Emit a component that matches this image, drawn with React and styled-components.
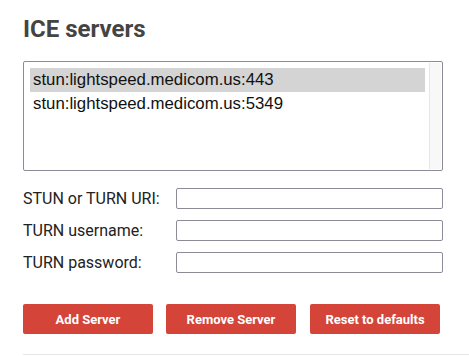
import React, { useState } from "react";
import styled, { createGlobalStyle } from "styled-components";

const GlobalStyle = createGlobalStyle`
  html, body {
    margin: 0;
    padding: 0;
    background: #fff;
  }
  body {
    font-family: Roboto, "Liberation Sans", sans-serif;
    color: #222;
  }
`;

const servers = ["stun:lightspeed.medicom.us:443", "stun:lightspeed.medicom.us:5349"];

const fields = [
  { id: "uri", label: "STUN or TURN URI:", type: "text" },
  { id: "user", label: "TURN username:", type: "text" },
  { id: "pass", label: "TURN password:", type: "password" }
];

const App = () => {
  const [selected, setSelected] = useState(0);

  return (
    <Page>
      <GlobalStyle />
      <Title>ICE servers</Title>
      <ListBox>
        <Items>
          {servers.map((server, index) => (
            <Item
              key={server}
              $active={selected === index}
              onClick={() => setSelected(index)}
            >
              {server}
            </Item>
          ))}
        </Items>
        <Scrollbar />
      </ListBox>
      <Form>
        {fields.map((field) => (
          <FieldRow key={field.id}>
            <Label htmlFor={field.id}>{field.label}</Label>
            <Input id={field.id} type={field.type} />
          </FieldRow>
        ))}
      </Form>
      <Buttons>
        <Button>Add Server</Button>
        <Button>Remove Server</Button>
        <Button>Reset to defaults</Button>
      </Buttons>
      <Divider />
    </Page>
  );
};

const Page = styled.div`
  padding: 15px 0 0 23px;
  width: 446px;
`;

const Title = styled.h2`
  margin: 0 0 18px 0;
  font-family: Roboto, "Liberation Sans", sans-serif;
  font-weight: bold;
  font-size: 24px;
  line-height: 28px;
  color: #444;
`;

const ListBox = styled.div`
  display: flex;
  box-sizing: border-box;
  width: 420px;
  height: 110px;
  border: 1px solid #8d8b98;
  border-radius: 2px;
`;

const Items = styled.div`
  flex: 1;
  padding: 6px 4px 0 6px;
`;

const Item = styled.div`
  height: 24px;
  line-height: 24px;
  padding-left: 3px;
  font-family: "Liberation Sans", Arial, sans-serif;
  font-size: 16.8px;
  color: #111;
  background: ${(p) => (p.$active ? "#d4d4d4" : "transparent")};
  cursor: default;
`;

const Scrollbar = styled.div`
  width: 11px;
  margin: 1px 1px 1px 0;
  background: #f8f8f8;
  border-left: 1px solid #e6e6e6;
`;

const Form = styled.div`
  display: flex;
  flex-direction: column;
  gap: 11px;
  margin-top: 17px;
`;

const FieldRow = styled.div`
  display: flex;
  align-items: center;
  height: 21px;
`;

const Label = styled.label`
  width: 153px;
  font-size: 16px;
  line-height: 21px;
  color: #222;
`;

const Input = styled.input`
  box-sizing: border-box;
  width: 267px;
  height: 21px;
  margin: 0;
  border: 1px solid #8d8b98;
  border-radius: 2px;
  padding: 0 4px;
  font-size: 13px;
  outline: none;
`;

const Buttons = styled.div`
  display: flex;
  gap: 13px;
  margin-top: 31px;
`;

const Button = styled.button`
  width: 130px;
  height: 30px;
  padding: 0;
  border: none;
  border-radius: 2px;
  background: #d44438;
  color: #fff;
  font-family: Roboto, "Liberation Sans", sans-serif;
  font-weight: bold;
  font-size: 13px;
  cursor: pointer;
  &:nth-child(3) {
    margin-left: 1px;
  }
`;

const Divider = styled.hr`
  margin: 20px 0 0 0;
  border: none;
  border-top: 1px solid #e6e6e6;
`;

export default App;
